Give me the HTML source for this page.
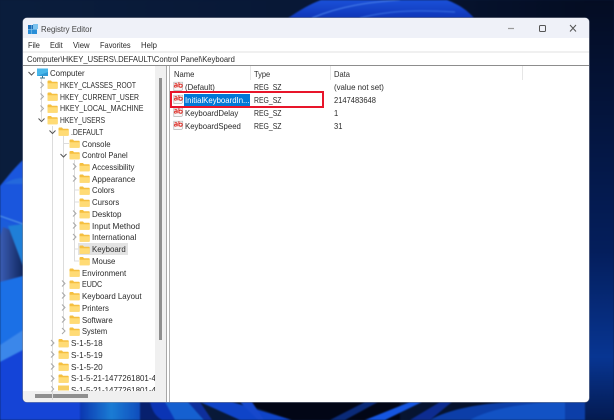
<!DOCTYPE html>
<html><head><meta charset="utf-8"><style>
html,body{margin:0;padding:0}
body{width:614px;height:420px;overflow:hidden;position:relative;background:#0a1a38;font-family:"Liberation Sans",sans-serif;font-size:8.4px;color:#2a2a2a}
.bg{position:absolute;left:0;top:0;filter:blur(.7px)}
.win{position:absolute;left:23px;top:18px;width:566px;height:384px;background:#fff;border-radius:4px;overflow:hidden;box-shadow:0 0 0 .5px #8a8f9c}
.t{position:absolute;white-space:nowrap;line-height:12px;filter:blur(.3px);transform:scaleX(var(--s,.93));transform-origin:left center}
svg.i{position:absolute;overflow:visible}
</style></head><body>
<svg class="bg" width="614" height="420" viewBox="0 0 614 420">
<defs>
<linearGradient id="a" x1="0" y1="0" x2="0" y2="1"><stop offset="0" stop-color="#1a50d8"/><stop offset="1" stop-color="#0f36b8"/></linearGradient>
<linearGradient id="b" x1="0" y1="0" x2="1" y2="0"><stop offset="0" stop-color="#0a1d3c"/><stop offset=".6" stop-color="#071634"/><stop offset="1" stop-color="#030b20"/></linearGradient>
<linearGradient id="r" x1="0" y1="0" x2="0" y2="1"><stop offset="0" stop-color="#040c22"/><stop offset=".6" stop-color="#041e5c"/><stop offset=".85" stop-color="#073592"/><stop offset="1" stop-color="#041a50"/></linearGradient>
<linearGradient id="n" x1="0" y1="0" x2="1" y2="0"><stop offset="0" stop-color="#3b5db4"/><stop offset="1" stop-color="#10275f"/></linearGradient>
<linearGradient id="g" x1="0" y1="0" x2="1" y2="0"><stop offset="0" stop-color="#0b36b0"/><stop offset=".45" stop-color="#1a7cd4"/><stop offset="1" stop-color="#0b3cb4"/></linearGradient>
</defs>
<rect width="614" height="420" fill="url(#b)"/>
<rect x="585" y="0" width="29" height="420" fill="url(#r)"/>
<path d="M0 186C8 176 16 166 23 160V420H0Z" fill="#1a56dd"/>
<path d="M0 218C8 222 16 225 23 227V266C14 262 6 255 0 240Z" fill="#1c60d8" opacity=".6"/>
<path d="M0 236L3 227L10 230L23 266V276L0 282Z" fill="url(#n)"/>
<path d="M8 226L23 224V266Z" fill="#1f7fd8"/>
<path d="M0 282L23 276V330L0 345Z" fill="#1b70e6"/>
<path d="M0 345L23 330V350L0 362Z" fill="#3b87ea"/>
<path d="M0 362L23 350V420H0Z" fill="#1444d8"/>
<path d="M4 184C10 180 16 178 23 178V184H6Z" fill="#2468dc"/>
<path d="M0 216L23 224" stroke="#5aa0ea" stroke-width="1" fill="none"/>
<path d="M288 18C300 10 310 4 321 0H447C460 5 468 11 474 18Z" fill="url(#a)"/>
<path d="M312 18C340 6 370 2 400 0" stroke="#4a80ea" stroke-width="1" fill="none"/>
<path d="M360 18C390 10 420 10 455 12" stroke="#3a70e0" stroke-width="1" fill="none"/>
<rect x="0" y="400" width="80" height="20" fill="#1544d6"/>
<rect x="80" y="400" width="70" height="20" fill="url(#g)"/>
<rect x="140" y="400" width="55" height="20" fill="#0b34b4"/>
<path d="M150 402C152 410 155 416 162 420H140V402Z" fill="#07206e"/>
<path d="M165 402H188L204 420H175Z" fill="#1560d0"/>
<path d="M188 402H200L212 420H204Z" fill="#0e2f9c"/>
<path d="M200 402H232L292 420H240Z" fill="#0f44c8"/>
<path d="M240 402H400V420H292Z" fill="#020616"/>
<path d="M252 402L264 420H258L240 402Z" fill="#1648cc"/>
<path d="M330 420L365 402H378L345 420Z" fill="#0a2a78"/>
<path d="M365 420L410 402H422L385 420Z" fill="#1555e0"/>
<path d="M410 420L440 402H452L430 420Z" fill="#0d2c90"/>
<path d="M430 420C450 408 490 402 520 402H585V420Z" fill="#0c3ea8"/>
<path d="M470 420C490 408 530 402 565 402V420Z" fill="#1252c4"/>
</svg>

<div class="win">
<div style="position:absolute;left:0;top:0;width:566px;height:20px;background:#eff1f8"></div>
<div style="position:absolute;left:0;top:33px;width:566px;height:1.5px;background:#f0f0f0"></div>
<div style="position:absolute;left:0;top:47px;width:566px;height:1px;background:#8d8d8d"></div>
<div style="position:absolute;left:132px;top:48px;width:11px;height:326px;background:#f0f0f0"></div>
<div style="position:absolute;left:0;top:373px;width:143px;height:11px;background:#f0f0f0"></div>
<div style="position:absolute;left:135.5px;top:60px;width:3.5px;height:262px;background:#8f8f8f"></div>
<div style="position:absolute;left:12px;top:376px;width:53px;height:3.5px;background:#8f8f8f"></div>
<div style="position:absolute;left:143px;top:48px;width:1px;height:336px;background:#a8a8a8"></div>
<div style="position:absolute;left:146px;top:48px;width:1px;height:336px;background:#b4b4b4"></div>
</div>

<svg class="i" style="left:0;top:0" width="614" height="420">
<defs>
<symbol id="f" viewBox="0 0 11 9" overflow="visible"><path d="M.5 1.5Q.5 .5 1.5 .5H4L5 1.7H10Q10.7 1.7 10.7 2.5V8Q10.7 8.8 10 8.8H1.2Q.5 8.8 .5 8Z" fill="#f5bf3f"/><path d="M.5 3.2H10.7V8Q10.7 8.8 10 8.8H1.2Q.5 8.8 .5 8Z" fill="#ffdb75"/></symbol>
<symbol id="c" viewBox="0 0 5 7" overflow="visible"><path d="M1 .5L4 3.5L1 6.5" fill="none" stroke="#a8a8a8" stroke-width="1"/></symbol>
<symbol id="d" viewBox="0 0 7 5" overflow="visible"><path d="M.5 1L3.5 4L6.5 1" fill="none" stroke="#555" stroke-width="1"/></symbol>
<symbol id="ab" viewBox="0 0 11 11" overflow="visible"><path d="M.8 1.2H9.7V7.5Q9.7 9.5 7.5 9.5H.8Z" fill="#f8f8f8" stroke="#b5b5b5" stroke-width=".7"/><path d="M1.6 3Q3.9 2 4.2 3.8V6.3M4.2 4.4Q1.3 4 1.3 5.4Q1.8 6.9 4.2 5.5M5.9 1.2V6.2M5.9 4.4Q6.8 2.8 8.2 3.2Q9.4 3.7 9.2 4.8Q9 6.4 7.6 6.3Q6.5 6.2 5.9 5.3" fill="none" stroke="#de2d26" stroke-width="1"/></symbol>
</defs>
<!-- title icon -->
<rect x="28" y="25" width="9" height="9" fill="#2a8fd8"/>
<path d="M28 25H37V29H28Z" fill="#1d6fb8"/>
<rect x="33" y="24" width="5" height="5" fill="#7ec3ee"/>
<path d="M31.5 25V34M28 29.5H37" stroke="#9fd0ee" stroke-width=".5"/>
<!-- window controls -->
<path d="M508 28.5H514" stroke="#9a9a9a" stroke-width="1.2"/>
<rect x="539.5" y="25.5" width="6" height="6" rx="1" fill="none" stroke="#555" stroke-width="1"/>
<path d="M570 25L576 31.5M576 25L570 31.5" stroke="#555" stroke-width="1"/>
<!-- tree guides -->
<g stroke="#dcdcdc" stroke-width="1" fill="none">
<path d="M41.5 78V120"/><path d="M52.5 126V400"/><path d="M63.5 136V143.500H69"/><path d="M63.5 143V330"/><path d="M74.500 160V261H79"/>
<path d="M74.500 190H79M74.500 202H79M74.500 249H79"/>
</g>
<!-- header dividers -->
<path d="M250.500 66V80M330.500 66V80M522.500 66V80" stroke="#e6e6e6" stroke-width="1"/>
<!-- computer -->
<use href="#d" x="28" y="71" width="7" height="5"/>
<rect x="37" y="68.500" width="11" height="7.500" fill="#2f9ad6"/>
<path d="M37 68.500H48V72L37 76Z" fill="#48b7ea"/>
<path d="M40 78H45M42.500 76V78" stroke="#33708f" stroke-width="1"/>
<!-- chevrons level 1 -->
<use href="#c" x="39.500" y="81.500" width="5" height="7"/>
<use href="#c" x="39.500" y="93" width="5" height="7"/>
<use href="#c" x="39.500" y="105" width="5" height="7"/>
<use href="#d" x="38" y="117.500" width="7" height="5"/>
<use href="#d" x="49" y="129.500" width="7" height="5"/>
<use href="#d" x="60" y="153" width="7" height="5"/>
<!-- folders level 1 -->
<use href="#f" x="47" y="80" width="11" height="9"/>
<use href="#f" x="47" y="92" width="11" height="9"/>
<use href="#f" x="47" y="104" width="11" height="9"/>
<use href="#f" x="47" y="115.500" width="11" height="9"/>
<use href="#f" x="58" y="127" width="11" height="9"/>
<use href="#f" x="69" y="139" width="11" height="9"/>
<use href="#f" x="69" y="150.500" width="11" height="9"/>
<!-- level 4 -->
<rect x="78" y="243" width="50" height="12" fill="#e3e3e3"/>
<use href="#c" x="72" y="163" width="5" height="7"/>
<use href="#c" x="72" y="175" width="5" height="7"/>
<use href="#c" x="72" y="210" width="5" height="7"/>
<use href="#c" x="72" y="222" width="5" height="7"/>
<use href="#c" x="72" y="233.500" width="5" height="7"/>
<use href="#f" x="79" y="162.500" width="11" height="9"/>
<use href="#f" x="79" y="174" width="11" height="9"/>
<use href="#f" x="79" y="186" width="11" height="9"/>
<use href="#f" x="79" y="198" width="11" height="9"/>
<use href="#f" x="79" y="209.500" width="11" height="9"/>
<use href="#f" x="79" y="221" width="11" height="9"/>
<use href="#f" x="79" y="233" width="11" height="9"/>
<use href="#f" x="79" y="245" width="11" height="9"/>
<use href="#f" x="79" y="256.500" width="11" height="9"/>
<!-- level 3 rest -->
<use href="#f" x="69" y="268" width="11" height="9"/>
<use href="#c" x="61" y="280" width="5" height="7"/>
<use href="#c" x="61" y="292" width="5" height="7"/>
<use href="#c" x="61" y="304" width="5" height="7"/>
<use href="#c" x="61" y="316" width="5" height="7"/>
<use href="#c" x="61" y="327.500" width="5" height="7"/>
<use href="#f" x="69" y="280" width="11" height="9"/>
<use href="#f" x="69" y="291.500" width="11" height="9"/>
<use href="#f" x="69" y="303" width="11" height="9"/>
<use href="#f" x="69" y="315" width="11" height="9"/>
<use href="#f" x="69" y="327" width="11" height="9"/>
<!-- level 2 -->
<use href="#c" x="50" y="339.500" width="5" height="7"/>
<use href="#c" x="50" y="351" width="5" height="7"/>
<use href="#c" x="50" y="363" width="5" height="7"/>
<use href="#c" x="50" y="375" width="5" height="7"/>
<use href="#c" x="50" y="386" width="5" height="6"/>
<use href="#f" x="58" y="338.500" width="11" height="9"/>
<use href="#f" x="58" y="350" width="11" height="9"/>
<use href="#f" x="58" y="362" width="11" height="9"/>
<use href="#f" x="58" y="374" width="11" height="9"/>
<rect x="58" y="385.500" width="11" height="5" fill="#f7cf62"/>
<!-- value icons -->
<use href="#ab" x="173" y="81" width="11" height="11"/>
<use href="#ab" x="173" y="94" width="11" height="11"/>
<use href="#ab" x="173" y="107" width="11" height="11"/>
<use href="#ab" x="173" y="120" width="11" height="11"/>
</svg>

<div style="position:absolute;left:184px;top:93.500px;width:66px;height:13px;background:#0078d7"></div>

<div class="t" style="left:41px;top:23px;color:#444">Registry Editor</div>
<div class="t" style="left:28px;top:39px;--s:.88">File</div>
<div class="t" style="left:50px;top:39px;--s:.88">Edit</div>
<div class="t" style="left:73px;top:39px;--s:.92">View</div>
<div class="t" style="left:100px;top:39px;--s:.89">Favorites</div>
<div class="t" style="left:141px;top:39px;--s:.93">Help</div>
<div class="t" style="left:27px;top:53px;--s:.91">Computer\HKEY_USERS\.DEFAULT\Control Panel\Keyboard</div>

<div class="t" style="left:50px;top:67px;--s:.94">Computer</div>
<div class="t" style="left:60px;top:79px;--s:.8">HKEY_CLASSES_ROOT</div>
<div class="t" style="left:60px;top:90.500px;--s:.82">HKEY_CURRENT_USER</div>
<div class="t" style="left:60px;top:102px;--s:.85">HKEY_LOCAL_MACHINE</div>
<div class="t" style="left:60px;top:114px;--s:.8">HKEY_USERS</div>
<div class="t" style="left:71px;top:125.500px;--s:.82">.DEFAULT</div>
<div class="t" style="left:82px;top:137.500px">Console</div>
<div class="t" style="left:82px;top:149px;--s:.9">Control Panel</div>
<div class="t" style="left:92px;top:161px">Accessibility</div>
<div class="t" style="left:92px;top:172.500px;--s:.96">Appearance</div>
<div class="t" style="left:92px;top:184px">Colors</div>
<div class="t" style="left:92px;top:196px">Cursors</div>
<div class="t" style="left:92px;top:208px;--s:.96">Desktop</div>
<div class="t" style="left:92px;top:219.500px;--s:.98">Input Method</div>
<div class="t" style="left:92px;top:231px;--s:.96">International</div>
<div class="t" style="left:92px;top:243px;--s:.94">Keyboard</div>
<div class="t" style="left:92px;top:255px">Mouse</div>
<div class="t" style="left:82px;top:266.500px;--s:.94">Environment</div>
<div class="t" style="left:82px;top:278px;--s:.85">EUDC</div>
<div class="t" style="left:82px;top:290px;--s:.94">Keyboard Layout</div>
<div class="t" style="left:82px;top:302px">Printers</div>
<div class="t" style="left:82px;top:313.500px">Software</div>
<div class="t" style="left:82px;top:325px;--s:.9">System</div>
<div class="t" style="left:71px;top:337px;--s:.97">S-1-5-18</div>
<div class="t" style="left:71px;top:349px;--s:.97">S-1-5-19</div>
<div class="t" style="left:71px;top:360.500px;--s:.97">S-1-5-20</div>
<div style="position:absolute;left:71px;top:366px;width:84px;height:25px;overflow:hidden">
<div class="t" style="left:0;top:6px;--s:.95">S-1-5-21-1477261801-4</div>
<div class="t" style="left:0;top:18px;--s:.95">S-1-5-21-1477261801-4</div>
</div>

<div class="t" style="left:174px;top:68px;--s:.91">Name</div>
<div class="t" style="left:254px;top:68px;--s:.89">Type</div>
<div class="t" style="left:334px;top:68px;--s:.9">Data</div>
<div class="t" style="left:185px;top:81px">(Default)</div>
<div class="t" style="left:254px;top:81px;--s:.82">REG_SZ</div>
<div class="t" style="left:334px;top:81px;--s:.94">(value not set)</div>
<div class="t" style="left:185px;top:94px;color:#fff">InitialKeyboardIn...</div>
<div class="t" style="left:254px;top:94px;--s:.82">REG_SZ</div>
<div class="t" style="left:334px;top:94px;--s:.9">2147483648</div>
<div class="t" style="left:185px;top:107px">KeyboardDelay</div>
<div class="t" style="left:254px;top:107px;--s:.82">REG_SZ</div>
<div class="t" style="left:334px;top:107px;--s:.9">1</div>
<div class="t" style="left:185px;top:120px">KeyboardSpeed</div>
<div class="t" style="left:254px;top:120px;--s:.82">REG_SZ</div>
<div class="t" style="left:334px;top:120px;--s:.9">31</div>

<div style="position:absolute;left:170px;top:91px;width:150px;height:13px;border:2px solid #e8152a"></div>
</body></html>
